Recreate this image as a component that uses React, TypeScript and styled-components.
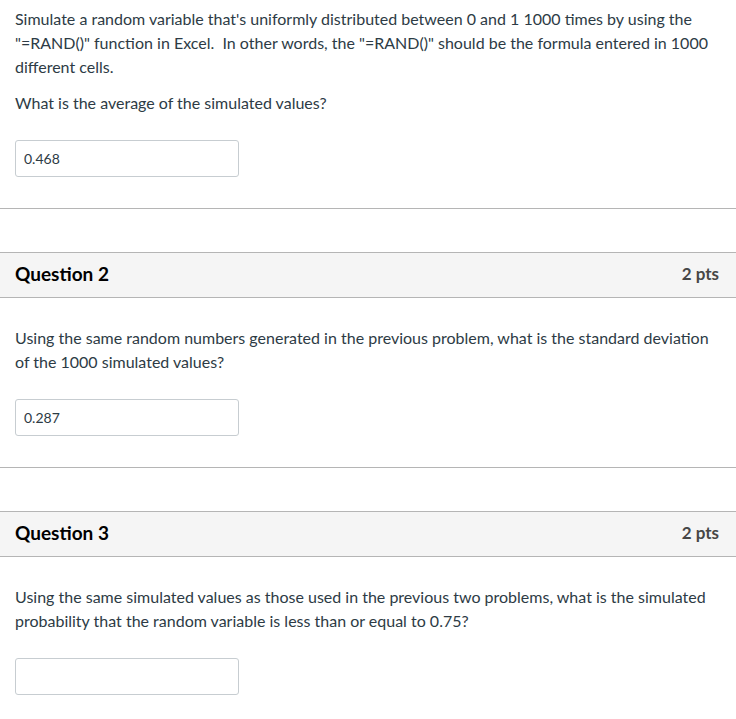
import React from "react";
import styled, { createGlobalStyle } from "styled-components";

const Global = createGlobalStyle`
  body {
    margin: 0;
    background: #ffffff;
    font-family: Lato, "Open Sans", "Liberation Sans", sans-serif;
    color: #2d3b45;
  }
`;

const Page = styled.div`
  width: 736px;
  display: flex;
  flex-direction: column;
`;

const Body = styled.div<{ $top: number }>`
  padding: ${(p) => p.$top}px 15px 31px 15px;
  display: flex;
  flex-direction: column;
`;

const Para = styled.p`
  margin: 0 0 12px 0;
  font-size: 16px;
  line-height: 24px;
  color: #2d3b45;
  &:last-of-type {
    margin-bottom: 0;
  }
`;

const Answer = styled.div`
  margin-top: 25px;
  width: 224px;
  height: 37px;
  box-sizing: border-box;
  border: 1px solid #c7cdd1;
  border-radius: 3px;
  background: #fff;
  padding: 0 8px;
  display: flex;
  align-items: center;
  font-size: 14px;
  color: #2d3b45;
`;

const Divider = styled.div`
  height: 1px;
  background: #b5b5b5;
  margin-bottom: 43px;
`;

const Header = styled.div`
  height: 46px;
  box-sizing: border-box;
  border-top: 1px solid #b5b5b5;
  border-bottom: 1px solid #b5b5b5;
  background: #f5f5f5;
  display: flex;
  align-items: center;
  justify-content: space-between;
  padding: 0 17px 3px 15px;
`;

const Title = styled.span`
  font-size: 19px;
  font-weight: 700;
  color: #000;
`;

const Points = styled.span`
  font-size: 17px;
  font-weight: 700;
  color: #464646;
`;

export default function App() {
  return (
    <Page>
      <Global />
      <Body $top={7}>
        <Para>
          Simulate a random variable that's uniformly distributed between 0 and 1 1000 times by using the
          "=RAND()" function in Excel.&nbsp; In other words, the "=RAND()" should be the formula entered in 1000
          different cells.
        </Para>
        <Para>What is the average of the simulated values?</Para>
        <Answer>0.468</Answer>
      </Body>
      <Divider />
      <Header>
        <Title>Question 2</Title>
        <Points>2 pts</Points>
      </Header>
      <Body $top={28}>
        <Para>
          Using the same random numbers generated in the previous problem, what is the standard deviation
          of the 1000 simulated values?
        </Para>
        <Answer>0.287</Answer>
      </Body>
      <Divider />
      <Header>
        <Title>Question 3</Title>
        <Points>2 pts</Points>
      </Header>
      <Body $top={28}>
        <Para>
          Using the same simulated values as those used in the previous two problems, what is the simulated
          probability that the random variable is less than or equal to 0.75?
        </Para>
        <Answer />
      </Body>
    </Page>
  );
}
